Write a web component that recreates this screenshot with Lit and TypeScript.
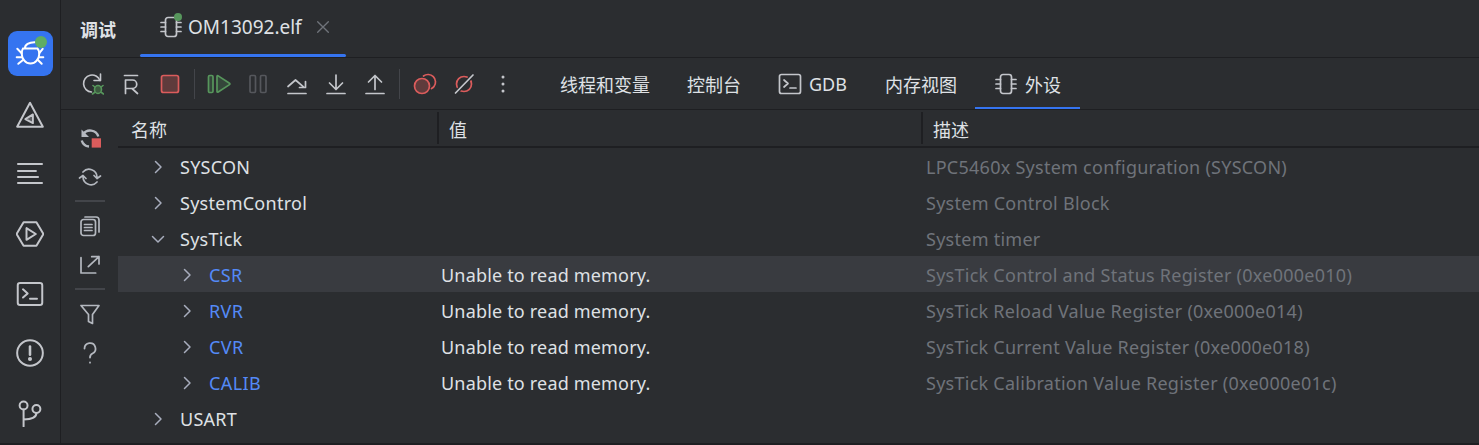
import { LitElement, html, css, svg } from "lit";
import { customElement } from "lit/decorators.js";

const ic = (size: number, body: unknown) =>
  html`<svg class="ic" width=${size} height=${size} viewBox="0 0 24 24" fill="none" stroke="currentColor" stroke-width="1.7" stroke-linecap="round" stroke-linejoin="round">${body}</svg>`;

const G = "#57965c", R = "#db5c5c", GR = "#c4c6cb", D = "#55575c";

const chip = svg`<rect x="6.500" y="2.500" width="11" height="19" rx="2.500"/><path d="M2 7.500h4.500M2 12h4.500M2 16.500h4.500M17.500 7.500H22M17.500 12H22M17.500 16.500H22"/>`;
const term = svg`<rect x="1.500" y="2.500" width="21" height="19" rx="2"/><path d="M6 8l4 3.500-4 3.500M12 16h6"/>`;

const railIcons = [
  svg`<path d="M12 1.500 1 22h22z"/><path d="M14.500 11.500v7.500l-6.500-3.500z" fill="#5a5c60" stroke-width="1.600"/>`,
  svg`<path d="M1.700 3.400h20.600M1.700 9.400h15.400M1.700 14.600h17.200M1.700 19.700h20.600"/>`,
  svg`<path d="M6.500 2h11L23.500 12l-6 10h-11L.5 12z"/><path d="M9 7v10l8-5z"/>`,
  term,
  svg`<circle cx="12" cy="12" r="11"/><path d="M12 6.500v7" stroke-width="2.200"/><circle cx="12" cy="17.200" r=".9" fill="currentColor"/>`,
  svg`<circle cx="6.500" cy="5.500" r="3.400"/><circle cx="17.500" cy="8.500" r="3.400"/><path d="M6.500 9v14.500M17.500 12c0 3.500-3 5.500-11 5.500"/>`,
];

const tools = [
  html`<span class="tb" style="color:${GR}"><svg width="24" height="24" viewBox="-1.500 0 24 24" fill="none" stroke="currentColor" stroke-width="1.600" stroke-linecap="round" stroke-linejoin="round"><path d="M10 20A8.500 8.500 0 1 1 18.500 8.500"/><path d="M19 2v6.500h-6.500"/><g stroke=${G}><ellipse cx="16.500" cy="17.500" rx="3.500" ry="4" fill="#3c5a3f"/><path d="M11.500 13.500l1.800 1.500M21.500 13.500l-1.800 1.500M11 22l2-1.500M22 22l-2-1.500"/></g></svg></span>`,
  html`<span class="tb" style="color:${GR}">${ic(24, svg`<path d="M5.500 3.500h13M6.500 21.500V8h7a4 4 0 0 1 0 8.500h-7M13 16.500l5.500 5"/>`)}</span>`,
  html`<span class="tb" style="color:${R}">${ic(24, svg`<rect x="3.500" y="3.500" width="17" height="17" rx="2" fill="#5f3b3c"/>`)}</span>`,
  "sep",
  html`<span class="tb" style="color:${G}">${ic(24, svg`<rect x="1.500" y="3.500" width="4.500" height="17" rx="1.200" fill="#34463a"/><path d="M10 4.500c0-.700.600-1 1.200-.6l11.300 7.400c.5.300.5 1 0 1.300L11.200 20c-.6.400-1.200.1-1.200-.6z" fill="#34463a"/>`)}</span>`,
  html`<span class="tb" style="color:${D}">${ic(24, svg`<rect x="4" y="3.500" width="5.500" height="17" rx="1.200"/><rect x="14.500" y="3.500" width="5.500" height="17" rx="1.200"/>`)}</span>`,
  html`<span class="tb" style="color:${GR}">${ic(24, svg`<path d="M3 21.500h18M3 14.500l7.500-6.500 8 6.800M20.500 9.500v6h-6"/>`)}</span>`,
  html`<span class="tb" style="color:${GR}">${ic(24, svg`<path d="M3 21.500h18M12 3v14M5.500 11l6.500 6.500 6.500-6.500"/>`)}</span>`,
  html`<span class="tb" style="color:${GR}">${ic(24, svg`<path d="M3 21.500h18M12 17.500V3.500M5.500 10l6.500-6.500L18.500 10"/>`)}</span>`,
  "sep",
  html`<span class="tb" style="color:${R}">${ic(24, svg`<circle cx="9" cy="14" r="7.500" fill="#5f3b3c"/><path d="M10.500 4a7.500 7.500 0 0 1 10.500 10.500c-.5.800-1.500 1.500-2.500 2"/>`)}</span>`,
  html`<span class="tb" style="color:${R}"><svg width="24" height="24" viewBox="0 0 24 24" fill="none" stroke-width="1.700" stroke-linecap="round"><circle cx="12" cy="12" r="7.500" stroke=${R}/><path d="M3.500 21 21 3" stroke="#2b2d30" stroke-width="4"/><path d="M3.500 21 21 3" stroke=${GR}/></svg></span>`,
  html`<span class="tb" style="color:${GR}">${ic(24, svg`<circle cx="12" cy="5" r="1.500" fill="currentColor" stroke="none"/><circle cx="12" cy="12" r="1.500" fill="currentColor" stroke="none"/><circle cx="12" cy="19" r="1.500" fill="currentColor" stroke="none"/>`)}</span>`,
];

type Row = { name: string; lvl: number; open?: boolean; val?: string; desc: string; hl?: boolean };
const UM = "Unable to read memory.";
const rows: Row[] = [
  { name: "SYSCON", lvl: 0, desc: "LPC5460x System configuration (SYSCON)" },
  { name: "SystemControl", lvl: 0, desc: "System Control Block" },
  { name: "SysTick", lvl: 0, open: true, desc: "System timer" },
  { name: "CSR", lvl: 1, val: UM, hl: true, desc: "SysTick Control and Status Register (0xe000e010)" },
  { name: "RVR", lvl: 1, val: UM, desc: "SysTick Reload Value Register (0xe000e014)" },
  { name: "CVR", lvl: 1, val: UM, desc: "SysTick Current Value Register (0xe000e018)" },
  { name: "CALIB", lvl: 1, val: UM, desc: "SysTick Calibration Value Register (0xe000e01c)" },
  { name: "USART", lvl: 0, desc: "" },
];

@customElement("app-root")
export class AppRoot extends LitElement {
  static styles = css`
    :host { display: block; width: 1479px; height: 445px; overflow: hidden; background: #2b2d30; color: #dfe1e5;
      font-family: "Noto Sans", "Noto Sans CJK SC", sans-serif; font-size: 18px; }
    .ic { display: block; }
    .app { display: flex; height: 443px; border-bottom: 2px solid #1e1f22; }
    .rail { width: 60px; flex: none; border-right: 1px solid #1e1f22; display: flex; flex-direction: column; align-items: center; padding-top: 31px; box-sizing: content-box; color: #c4c6cb; }
    .bug { width: 45px; height: 45px; flex: none; border-radius: 9px; background: #3574f0; color: #fff; display: flex; align-items: center; justify-content: center; position: relative; margin-bottom: 9px; }
    .dot { position: absolute; border-radius: 50%; background: #57965c; }
    .bug .dot { width: 12px; height: 12px; right: 6px; top: 5px; background: #5fad65; }
    .railbtn { height: 59.600px; flex: none; display: flex; align-items: center; justify-content: center; }
    .main { flex: 1; min-width: 0; display: flex; flex-direction: column; }
    .top { height: 57px; flex: none; display: flex; align-items: stretch; border-bottom: 1px solid #1e1f22; box-sizing: content-box; }
    .title { font-weight: 700; padding-left: 19px; width: 60px; display: flex; align-items: center; font-size: 18px; flex: none; box-sizing: content-box; }
    .tab { position: relative; width: 206px; display: flex; align-items: center; padding: 0 0 4px 19px; box-sizing: border-box; gap: 5px; color: #dfe1e5; font-size: 19px; }
    .tab::after { content: ""; position: absolute; left: 0; right: 0; bottom: 0; height: 3px; border-radius: 2px; background: #3574f0; }
    .tab .chipw { position: relative; color: #c4c6cb; display: block; }
    .tab .dot { width: 8px; height: 8px; right: 1px; top: -2px; }
    .x { margin-left: 8px; color: #6f737a; }
    .tools { height: 51px; flex: none; display: flex; align-items: center; padding-left: 11px; border-bottom: 1px solid #1e1f22; box-sizing: content-box; }
    .tb { width: 39px; flex: none; display: flex; justify-content: center; }
    .sep { width: 1px; height: 30px; background: #43454a; margin: 0 4.750px; flex: none; }
    .vtabs { display: flex; align-self: stretch; margin-left: 19.500px; }
    .vt { position: relative; display: flex; align-items: center; padding: 0 18.500px; color: #dfe1e5; }
    .vt.ig { gap: 7px; padding-right: 19.500px; }
    .vt.on::after { content: ""; position: absolute; left: 0; right: 0; bottom: 0; height: 2px; background: #3574f0; }
    .vt .ic { color: #c4c6cb; }
    .body { flex: 1; display: flex; min-height: 0; }
    .side { width: 57px; flex: none; display: flex; flex-direction: column; align-items: center; color: #b4b8bf; padding-top: 8px; }
    .sb { height: 39px; flex: none; display: flex; align-items: center; justify-content: center; }
    .hr { width: 30px; height: 2px; background: #43454a; margin: 4px 0; flex: none; }
    .table { flex: 1; min-width: 0; display: flex; flex-direction: column; }
    .head, .row { display: grid; grid-template-columns: 319px 484px 1fr; align-items: center; }
    .head { height: 38px; border-bottom: 2px solid #1e1f22; flex: none; box-sizing: border-box; }
    .head div { height: 100%; display: flex; align-items: center; padding: 2px 0 0 13px; box-sizing: border-box; }
    .head div + div { border-left: 2px solid #1e1f22; height: 32px; padding-left: 10px; }
    .row { height: 36px; padding-top: 2px; box-sizing: border-box; flex: none; letter-spacing: .26px; }
    .row.hl { background: #393b40; }
    .name { display: flex; align-items: center; }
    .chev { width: 16px; height: 16px; color: #a8adbd; flex: none; }
    .lvl0 { padding-left: 32px; gap: 14px; }
    .lvl1 { padding-left: 61px; gap: 14px; }
    .lvl1 .txt { color: #548af7; letter-spacing: .4px; }
    .val { padding-left: 4px; color: #dfe1e5; letter-spacing: .18px; }
    .desc { padding-left: 5px; color: #6f737a; white-space: nowrap; }
  `;

  render() {
    return html`<div class="app">
      <div class="rail">
        <div class="bug">
          <svg width="30" height="30" viewBox="0 0 30 30" fill="none" stroke="#fff" stroke-width="2" stroke-linecap="round"><path d="M10 9.500c-.5-3.500 4-6.500 10-6.300M8 9.500h14.500c1.300 1.500 1.800 3 1.800 5 0 5.500-4 10-8.800 10S6.700 20 6.700 14.500c0-2 .3-3.500 1.300-5z"/><path d="M2.300 9.800l4.400 4.400M1.700 18.200h5M3.300 24.800l5-4M27.700 9.800l-3.400 4.400M28.300 18.200h-4M26.700 24.800l-4-4"/></svg>
          <span class="dot"></span>
        </div>
        ${railIcons.map((b) => html`<div class="railbtn">${ic(28, b)}</div>`)}
      </div>
      <div class="main">
        <div class="top">
          <div class="title">调试</div>
          <div class="tab">
            <span class="chipw">${ic(24, chip)}<span class="dot"></span></span>
            <span>OM13092.elf</span>
            <span class="x">${ic(16, svg`<path d="M4 4l16 16M20 4 4 20" stroke-width="2"/>`)}</span>
          </div>
        </div>
        <div class="tools">
          ${tools.map((t) => (t === "sep" ? html`<span class="sep"></span>` : t))}
          <div class="vtabs">
            <div class="vt">线程和变量</div>
            <div class="vt">控制台</div>
            <div class="vt ig">${ic(24, term)}GDB</div>
            <div class="vt">内存视图</div>
            <div class="vt ig on">${ic(24, chip)}外设</div>
          </div>
        </div>
        <div class="body">
          <div class="side">
            <div class="sb"><svg width="24" height="24" viewBox="0 0 24 24" fill="none" stroke="currentColor" stroke-width="2.400"><path d="M5 8.500A8.500 8.500 0 0 1 20.300 10.500"/><path d="M3.500 3.500v7.500h7.500z" fill="currentColor" stroke="none"/><path d="M3.700 14.500A8.500 8.500 0 0 0 11 20.500"/><rect x="13.700" y="12.300" width="9.300" height="9.300" fill="#db5c5c" stroke="none"/></svg></div>
            <div class="sb">${ic(24, svg`<path d="M1.500 13l3.500-2.500 3 3M5 10.500v1.500a8 8 0 0 0 14 5M22.500 11 19 13.500l-3-3M19 13.500V12A8 8 0 0 0 5 7"/>`)}</div>
            <div class="hr"></div>
            <div class="sb">${ic(24, svg`<rect x="3" y="5.500" width="14.500" height="16" rx="2.500"/><path d="M7 3h11a3 3 0 0 1 3 3v12M6.500 10.500h7.500M6.500 13.500h7.500M6.500 16.500h7.500"/>`)}</div>
            <div class="sb">${ic(24, svg`<path d="M3 4.700V20h14.700M10.300 13.700 21 3.700M13.700 3.700H21V11"/>`)}</div>
            <div class="hr"></div>
            <div class="sb">${ic(24, svg`<path d="M3 3.500h18L14.500 12.500v9l-4-2v-7z"/>`)}</div>
            <div class="sb">${ic(24, svg`<path d="M6.500 7.500a5.500 5.500 0 1 1 8 5c-2 1-2.500 2-2.500 4M12 21.500v.2" stroke-width="1.800"/>`)}</div>
          </div>
          <div class="table">
            <div class="head"><div>名称</div><div>值</div><div>描述</div></div>
            ${rows.map((r) => html`<div class="row ${r.hl ? "hl" : ""}">
              <div class="name lvl${r.lvl}">
                <svg class="chev" viewBox="0 0 16 16" fill="none" stroke="currentColor" stroke-width="1.500" stroke-linecap="round" stroke-linejoin="round"><path d=${r.open ? "M2.500 5.500 8 11l5.500-5.500" : "M5.500 2.500 11 8l-5.500 5.500"}></path></svg>
                <span class="txt">${r.name}</span>
              </div>
              <div class="val">${r.val ?? ""}</div>
              <div class="desc">${r.desc}</div>
            </div>`)}
          </div>
        </div>
      </div>
    </div>`;
  }
}
